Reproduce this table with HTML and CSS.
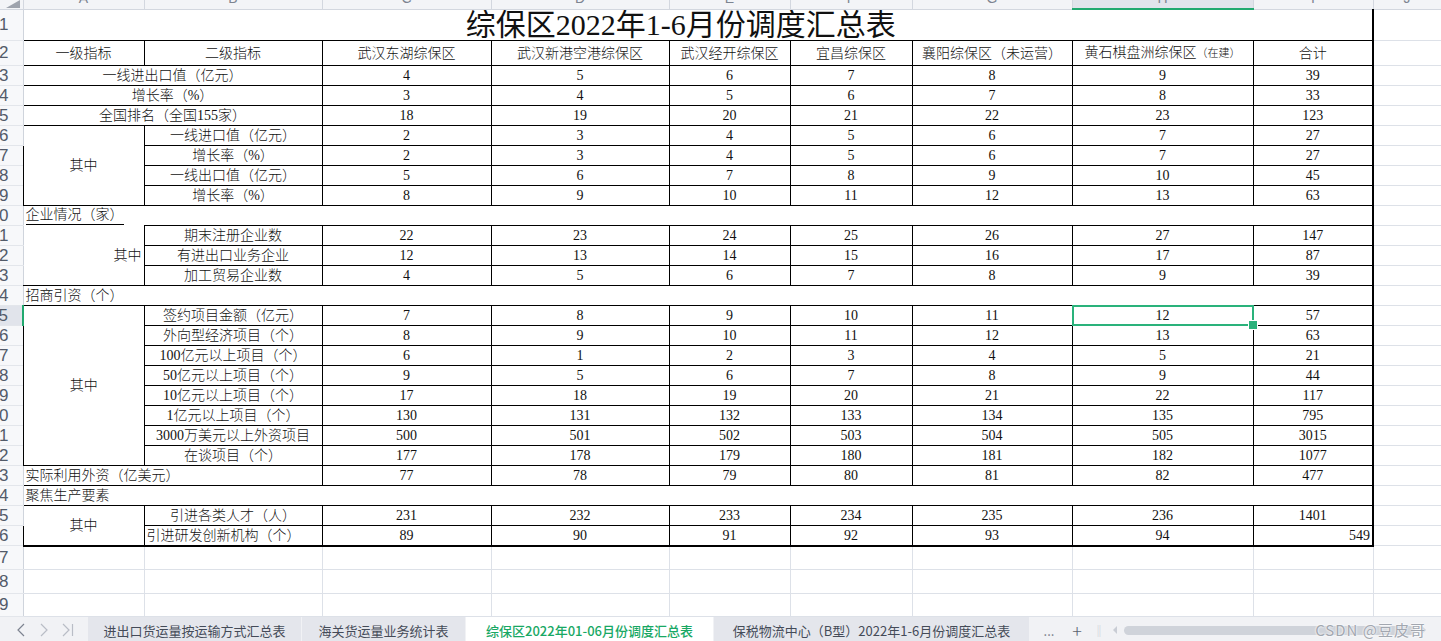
FILE: index.html
```html
<!DOCTYPE html>
<html lang="zh-CN">
<head>
<meta charset="utf-8">
<title>综保区2022年1-6月份调度汇总表</title>
<link rel="stylesheet" href="styles.css">
</head>
<body>
<div class="app">
<table class="sheet">
<colgroup>
<col class="w-rh"><col class="w-a"><col class="w-b"><col class="w-c"><col class="w-d"><col class="w-e"><col class="w-f"><col class="w-g"><col class="w-h"><col class="w-i"><col class="w-j">
</colgroup>
<tr class="r-ch">
<td class="corner"><div class="tri"></div></td>
<td class="ch"><div class="cl"><span>A</span></div></td>
<td class="ch"><div class="cl"><span>B</span></div></td>
<td class="ch"><div class="cl"><span>C</span></div></td>
<td class="ch"><div class="cl"><span>D</span></div></td>
<td class="ch"><div class="cl"><span>E</span></div></td>
<td class="ch"><div class="cl"><span>F</span></div></td>
<td class="ch"><div class="cl"><span>G</span></div></td>
<td class="ch chsel"><div class="cl"><span>H</span></div></td>
<td class="ch"><div class="cl"><span>I</span></div></td>
<td class="ch"><div class="cl"><span>J</span></div></td>
</tr>
<tr class="r-t">
<td class="rh"><div class="rn">1</div></td>
<td class="title" colspan="9">综保区2022年1-6月份调度汇总表</td>
<td class="gj"></td>
</tr>
<tr class="r-h">
<td class="rh"><div class="rn">2</div></td>
<td class="b">一级指标</td>
<td class="b">二级指标</td>
<td class="b">武汉东湖综保区</td>
<td class="b">武汉新港空港综保区</td>
<td class="b">武汉经开综保区</td>
<td class="b">宜昌综保区</td>
<td class="b">襄阳综保区（未运营）</td>
<td class="b">黄石棋盘洲综保区<span class="small">（在建）</span></td>
<td class="b bi">合计</td>
<td class="gj"></td>
</tr>
<tr class="r">
<td class="rh"><div class="rn">3</div></td>
<td class="b" colspan="2">一线进出口值（亿元）</td>
<td class="b">4</td><td class="b">5</td><td class="b">6</td><td class="b">7</td><td class="b">8</td><td class="b">9</td><td class="b bi">39</td>
<td class="gj"></td>
</tr>
<tr class="r">
<td class="rh"><div class="rn">4</div></td>
<td class="b" colspan="2">增长率（%）</td>
<td class="b">3</td><td class="b">4</td><td class="b">5</td><td class="b">6</td><td class="b">7</td><td class="b">8</td><td class="b bi">33</td>
<td class="gj"></td>
</tr>
<tr class="r">
<td class="rh"><div class="rn">5</div></td>
<td class="b" colspan="2">全国排名（全国155家）</td>
<td class="b">18</td><td class="b">19</td><td class="b">20</td><td class="b">21</td><td class="b">22</td><td class="b">23</td><td class="b bi">123</td>
<td class="gj"></td>
</tr>
<tr class="r">
<td class="rh"><div class="rn">6</div></td>
<td class="b" rowspan="4">其中</td>
<td class="b">一线进口值（亿元）</td>
<td class="b">2</td><td class="b">3</td><td class="b">4</td><td class="b">5</td><td class="b">6</td><td class="b">7</td><td class="b bi">27</td>
<td class="gj"></td>
</tr>
<tr class="r">
<td class="rh"><div class="rn">7</div></td>
<td class="b">增长率（%）</td>
<td class="b">2</td><td class="b">3</td><td class="b">4</td><td class="b">5</td><td class="b">6</td><td class="b">7</td><td class="b bi">27</td>
<td class="gj"></td>
</tr>
<tr class="r">
<td class="rh"><div class="rn">8</div></td>
<td class="b">一线出口值（亿元）</td>
<td class="b">5</td><td class="b">6</td><td class="b">7</td><td class="b">8</td><td class="b">9</td><td class="b">10</td><td class="b bi">45</td>
<td class="gj"></td>
</tr>
<tr class="r">
<td class="rh"><div class="rn">9</div></td>
<td class="b">增长率（%）</td>
<td class="b">8</td><td class="b">9</td><td class="b">10</td><td class="b">11</td><td class="b">12</td><td class="b">13</td><td class="b bi">63</td>
<td class="gj"></td>
</tr>
<tr class="r">
<td class="rh"><div class="rn">10</div></td>
<td class="sec sec-open" colspan="9"><span class="ul">企业情况（家）</span></td>
<td class="gj"></td>
</tr>
<tr class="r">
<td class="rh"><div class="rn">11</div></td>
<td class="qz-right" rowspan="3">其中</td>
<td class="b">期末注册企业数</td>
<td class="b">22</td><td class="b">23</td><td class="b">24</td><td class="b">25</td><td class="b">26</td><td class="b">27</td><td class="b bi">147</td>
<td class="gj"></td>
</tr>
<tr class="r">
<td class="rh"><div class="rn">12</div></td>
<td class="b">有进出口业务企业</td>
<td class="b">12</td><td class="b">13</td><td class="b">14</td><td class="b">15</td><td class="b">16</td><td class="b">17</td><td class="b bi">87</td>
<td class="gj"></td>
</tr>
<tr class="r">
<td class="rh"><div class="rn">13</div></td>
<td class="b">加工贸易企业数</td>
<td class="b">4</td><td class="b">5</td><td class="b">6</td><td class="b">7</td><td class="b">8</td><td class="b">9</td><td class="b bi">39</td>
<td class="gj"></td>
</tr>
<tr class="r">
<td class="rh"><div class="rn">14</div></td>
<td class="sec" colspan="9">招商引资（个）</td>
<td class="gj"></td>
</tr>
<tr class="r">
<td class="rh rhsel"><div class="rn">15</div></td>
<td class="b" rowspan="8">其中</td>
<td class="b">签约项目金额（亿元）</td>
<td class="b">7</td><td class="b">8</td><td class="b">9</td><td class="b">10</td><td class="b">11</td><td class="b sel">12</td><td class="b bi">57</td>
<td class="gj"></td>
</tr>
<tr class="r">
<td class="rh"><div class="rn">16</div></td>
<td class="b">外向型经济项目（个）</td>
<td class="b">8</td><td class="b">9</td><td class="b">10</td><td class="b">11</td><td class="b">12</td><td class="b">13</td><td class="b bi">63</td>
<td class="gj"></td>
</tr>
<tr class="r">
<td class="rh"><div class="rn">17</div></td>
<td class="b">100亿元以上项目（个）</td>
<td class="b">6</td><td class="b">1</td><td class="b">2</td><td class="b">3</td><td class="b">4</td><td class="b">5</td><td class="b bi">21</td>
<td class="gj"></td>
</tr>
<tr class="r">
<td class="rh"><div class="rn">18</div></td>
<td class="b">50亿元以上项目（个）</td>
<td class="b">9</td><td class="b">5</td><td class="b">6</td><td class="b">7</td><td class="b">8</td><td class="b">9</td><td class="b bi">44</td>
<td class="gj"></td>
</tr>
<tr class="r">
<td class="rh"><div class="rn">19</div></td>
<td class="b">10亿元以上项目（个）</td>
<td class="b">17</td><td class="b">18</td><td class="b">19</td><td class="b">20</td><td class="b">21</td><td class="b">22</td><td class="b bi">117</td>
<td class="gj"></td>
</tr>
<tr class="r">
<td class="rh"><div class="rn">20</div></td>
<td class="b">1亿元以上项目（个）</td>
<td class="b">130</td><td class="b">131</td><td class="b">132</td><td class="b">133</td><td class="b">134</td><td class="b">135</td><td class="b bi">795</td>
<td class="gj"></td>
</tr>
<tr class="r">
<td class="rh"><div class="rn">21</div></td>
<td class="b">3000万美元以上外资项目</td>
<td class="b">500</td><td class="b">501</td><td class="b">502</td><td class="b">503</td><td class="b">504</td><td class="b">505</td><td class="b bi">3015</td>
<td class="gj"></td>
</tr>
<tr class="r">
<td class="rh"><div class="rn">22</div></td>
<td class="b">在谈项目（个）</td>
<td class="b">177</td><td class="b">178</td><td class="b">179</td><td class="b">180</td><td class="b">181</td><td class="b">182</td><td class="b bi">1077</td>
<td class="gj"></td>
</tr>
<tr class="r">
<td class="rh"><div class="rn">23</div></td>
<td class="b left" colspan="2">实际利用外资（亿美元）</td>
<td class="b">77</td><td class="b">78</td><td class="b">79</td><td class="b">80</td><td class="b">81</td><td class="b">82</td><td class="b bi">477</td>
<td class="gj"></td>
</tr>
<tr class="r">
<td class="rh"><div class="rn">24</div></td>
<td class="sec" colspan="9">聚焦生产要素</td>
<td class="gj"></td>
</tr>
<tr class="r">
<td class="rh"><div class="rn">25</div></td>
<td class="b last" rowspan="2">其中</td>
<td class="b">引进各类人才（人）</td>
<td class="b">231</td><td class="b">232</td><td class="b">233</td><td class="b">234</td><td class="b">235</td><td class="b">236</td><td class="b bi">1401</td>
<td class="gj"></td>
</tr>
<tr class="r">
<td class="rh"><div class="rn">26</div></td>
<td class="b last left">引进研发创新机构（个）</td>
<td class="b last">89</td><td class="b last">90</td><td class="b last">91</td><td class="b last">92</td><td class="b last">93</td><td class="b last">94</td><td class="b bi last right">549</td>
<td class="gj"></td>
</tr>
<tr class="r-e">
<td class="rh"><div class="rn">27</div></td>
<td class="g"></td><td class="g"></td><td class="g"></td><td class="g"></td><td class="g"></td><td class="g"></td><td class="g"></td><td class="g"></td><td class="g"></td><td class="g"></td>
</tr>
<tr class="r-e">
<td class="rh"><div class="rn">28</div></td>
<td class="g"></td><td class="g"></td><td class="g"></td><td class="g"></td><td class="g"></td><td class="g"></td><td class="g"></td><td class="g"></td><td class="g"></td><td class="g"></td>
</tr>
<tr class="r-l">
<td class="rh"><div class="rn">29</div></td>
<td class="g"></td><td class="g"></td><td class="g"></td><td class="g"></td><td class="g"></td><td class="g"></td><td class="g"></td><td class="g"></td><td class="g"></td><td class="g"></td>
</tr>
</table>

<div class="tabbar">
  <div class="nav">
    <svg class="navi" width="10" height="14" viewBox="0 0 10 14"><polyline points="8,1 2,7 8,13" fill="none" stroke="#7d8390" stroke-width="1.2"/></svg>
    <svg class="navi" width="10" height="14" viewBox="0 0 10 14"><polyline points="2,1 8,7 2,13" fill="none" stroke="#b9bdc6" stroke-width="1.2"/></svg>
    <svg class="navi" width="12" height="14" viewBox="0 0 12 14"><polyline points="1,1 7,7 1,13" fill="none" stroke="#b9bdc6" stroke-width="1.2"/><line x1="10.5" y1="1" x2="10.5" y2="13" stroke="#b9bdc6" stroke-width="1.2"/></svg>
  </div>
  <div class="tab t1">进出口货运量按运输方式汇总表</div>
  <div class="tab t2">海关货运量业务统计表</div>
  <div class="tab t3 active">综保区2022年01-06月份调度汇总表</div>
  <div class="tab t4">保税物流中心（B型）2022年1-6月份调度汇总表</div>
  <div class="more">...</div>
  <div class="plus">+</div>
  <div class="sep">‖</div>
  <div class="scroll">
    <svg class="sarr" width="6" height="10" viewBox="0 0 6 10"><polygon points="5,1 1,5 5,9" fill="#c9cdd5"/></svg>
    <div class="thumb"></div>
    <svg class="sarr" width="6" height="10" viewBox="0 0 6 10"><polygon points="1,1 5,5 1,9" fill="#c9cdd5"/></svg>
  </div>
  <div class="wm">CSDN @豆皮哥</div>
</div>
</div>
</body>
</html>
```
FILE: styles.css
```css
* { box-sizing: border-box; }
html, body { margin: 0; padding: 0; }
body {
  width: 1441px;
  height: 641px;
  overflow: hidden;
  background: #fff;
  font-family: "Liberation Serif", "Noto Sans CJK SC", serif;
  color: #111;
}
.app { width: 1441px; height: 641px; display: flex; flex-direction: column; }

.sheet {
  border-collapse: collapse;
  table-layout: fixed;
  width: 1441px;
}
.w-rh { width: 23px; }
.w-a { width: 121px; }
.w-b { width: 178px; }
.w-c { width: 169px; }
.w-d { width: 178px; }
.w-e { width: 121px; }
.w-f { width: 122px; }
.w-g { width: 160px; }
.w-h { width: 181px; }
.w-i { width: 120px; }
.w-j { width: 68px; }

.sheet td {
  padding: 0;
  font-size: 14px;
  line-height: 17px;
  text-align: center;
  vertical-align: middle;
  white-space: nowrap;
  overflow: hidden;
  font-weight: 300;
}

.r-ch td { height: 9px; }
.r-t td { height: 31px; }
.r-h td { height: 25px; }
.r td { height: 20px; }
.r-e td { height: 24px; }
.r-l td { height: 23px; }

/* column header */
.corner {
  background: #f3f4f7;
  border-right: 1px solid #d3d7df;
  border-bottom: 1px solid #d3d7df;
}
.tri {
  width: 0; height: 0;
  border-top: 8px solid transparent;
  border-right: 14px solid #9ea3ad;
  margin-left: 6px;
}
.ch {
  background: #f3f4f7;
  border-right: 1px solid #d3d7df;
  border-bottom: 1px solid #d3d7df;
}
.cl {
  height: 8px;
  overflow: hidden;
}
.cl span {
  display: block;
  margin-top: -9px;
  font-family: "Liberation Sans", sans-serif;
  font-size: 14px;
  line-height: 14px;
  color: #7d8491;
  font-weight: 400;
}
.chsel {
  background: #e1e4eb;
  border-bottom: 2px solid #21a96f;
}

/* row header */
.rh {
  background: #f7f8fa;
  border-right: 1px solid #cfd4dc;
  border-bottom: 1px solid #e3e6eb;
}
.rn {
  display: flex;
  justify-content: flex-end;
  overflow: hidden;
  padding-right: 14px;
  font-family: "Liberation Sans", sans-serif;
  font-size: 17px;
  line-height: 18px;
  color: #525b69;
  font-weight: 400;
}
.rhsel {
  background: #e1e4eb;
  border-right: 2px solid #21a96f;
}

/* table cells */
.sheet td.title {
  font-size: 30px;
  line-height: 30px;
  vertical-align: bottom;
  padding-right: 34px;
  border-right: 2px solid #000;
  border-bottom: 1px solid #000;
  font-weight: 400;
}
.b { border: 1px solid #000; }
.sheet td.bi { border-right: 2px solid #000; }
.sheet td.last { border-bottom: 2px solid #000; }
.sheet td.left { text-align: left; padding-left: 2px; }
.sheet td.right { text-align: right; padding-right: 2px; }
.small { font-size: 11px; }

.sheet td.sec {
  text-align: left;
  padding-left: 2px;
  border-right: 2px solid #000;
  border-bottom: 1px solid #000;
}
.sheet td.sec-open {
  border-bottom: none;
  vertical-align: bottom;
}
.ul {
  display: inline-block;
  border-bottom: 1px solid #000;
  line-height: 18px;
}
.sheet td.qz-right {
  text-align: right;
  padding-right: 2px;
  border-right: 1px solid #000;
  border-bottom: 1px solid #000;
}

.sheet td.sel { position: relative; overflow: visible; }
.sel::after {
  content: "";
  position: absolute;
  left: -1px; top: -1px; right: -1px; bottom: -1px;
  border: 2px solid #2ab27b;
}
.sel::before {
  content: "";
  position: absolute;
  right: -5px; bottom: -5px;
  width: 8px; height: 8px;
  background: #2ab27b;
  border: 1px solid #fff;
  z-index: 2;
}

.gj { border-bottom: 1px solid #dde1e8; }
.g {
  border-right: 1px solid #dde1e8;
  border-bottom: 1px solid #dde1e8;
}

/* tab bar */
.tabbar {
  flex: 1;
  display: flex;
  align-items: stretch;
  background: #f1f2f5;
  position: relative;
  font-family: "Noto Sans CJK SC", "Noto Sans", sans-serif;
  font-size: 13px;
  color: #444b58;
}
.nav {
  width: 88px;
  display: flex;
  align-items: center;
  gap: 13px;
  padding-left: 16px;
}
.tab {
  display: flex;
  align-items: center;
  justify-content: center;
  background: #e4e6ec;
  margin-right: 1px;
  line-height: 1;
}
.t1 { width: 213px; }
.t2 { width: 163px; }
.t3 { width: 247px; }
.t4 { width: 315px; }
.active {
  background: #fff;
  color: #18a864;
  font-weight: 500;
}
.more {
  width: 34px;
  display: flex;
  align-items: center;
  justify-content: center;
  color: #777d88;
  padding-left: 4px;
}
.plus {
  width: 26px;
  display: flex;
  align-items: center;
  justify-content: center;
  font-size: 18px;
  color: #5b6270;
  font-weight: 300;
}
.sep {
  width: 18px;
  display: flex;
  align-items: center;
  justify-content: center;
  color: #c6cad2;
  font-size: 12px;
}
.scroll {
  flex: 1;
  display: flex;
  align-items: center;
  gap: 6px;
  padding: 0 14px 0 4px;
}
.thumb {
  flex: 1;
  height: 9px;
  border-radius: 5px;
  background: #cfd3da;
}
.wm {
  position: absolute;
  right: 15px;
  top: 2px;
  font-size: 15px;
  color: #a2a7b0;
  letter-spacing: 1px;
  text-shadow: 0 0 2px #fff, 0 0 2px #fff;
}
```
